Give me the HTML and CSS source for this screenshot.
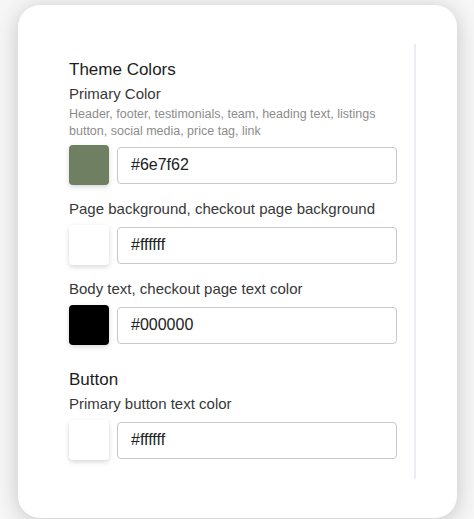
FILE: index.html
```html
<!DOCTYPE html>
<html lang="en">
<head>
    <meta charset="UTF-8">
    <meta name="viewport" content="width=device-width, initial-scale=1.0">
    <title>Theme Colors</title>
    <link rel="stylesheet" href="styles.css">
</head>
<body>
    <div class="card">
        <div class="panel">
            <h2 class="section-title">Theme Colors</h2>
            <h3 class="field-label">Primary Color</h3>
            <p class="field-help">Header, footer, testimonials, team, heading text, listings button, social media, price tag, link</p>
            <div class="color-row">
                <span class="swatch swatch-green"></span>
                <input class="hex-input" type="text" value="#6e7f62">
            </div>

            <h3 class="field-label spaced">Page background, checkout page background</h3>
            <div class="color-row">
                <span class="swatch swatch-white"></span>
                <input class="hex-input" type="text" value="#ffffff">
            </div>

            <h3 class="field-label spaced">Body text, checkout page text color</h3>
            <div class="color-row">
                <span class="swatch swatch-black"></span>
                <input class="hex-input" type="text" value="#000000">
            </div>

            <h2 class="section-title next-section">Button</h2>
            <h3 class="field-label">Primary button text color</h3>
            <div class="color-row">
                <span class="swatch swatch-white"></span>
                <input class="hex-input" type="text" value="#ffffff">
            </div>
        </div>
    </div>
</body>
</html>
```

FILE: styles.css
```css
html, body {
    height: 100%;
}
body {
    margin: 0;
    overflow: hidden;
    background-color: #f6f6f6;
    font-family: "Liberation Sans", Arial, sans-serif;
}
.card {
    box-sizing: border-box;
    width: 439px;
    height: 513px;
    margin: 5px 0 0 18px;
    padding: 39px 41px 0 51px;
    background-color: #fff;
    border-radius: 22px;
    box-shadow: 0 3px 22px rgba(0,0,0,0.2);
}
.panel {
    box-sizing: border-box;
    height: 435px;
    padding: 15px 17px 0 0;
    border-right: 2px solid #ebebf3;
}
.section-title {
    margin: 0;
    font-size: 17px;
    line-height: 22px;
    font-weight: normal;
    color: #1c1c1c;
}
.next-section {
    margin-top: 24px;
}
.field-label {
    margin: 3px 0 0;
    font-size: 15px;
    line-height: 20px;
    font-weight: normal;
    color: #383838;
}
.field-label.spaced {
    margin-top: 14px;
}
.field-help {
    margin: 2px 0 0;
    font-size: 12.5px;
    line-height: 17px;
    color: #8c8c8c;
}
.color-row {
    display: flex;
    align-items: center;
    gap: 8px;
    height: 40px;
    margin-top: 6px;
}
.field-help + .color-row {
    margin-top: 5px;
}
.swatch {
    width: 40px;
    height: 40px;
    border-radius: 4px;
    box-shadow: 0 2px 5px rgba(0,0,0,0.16);
}
.swatch-green {
    background-color: #6e7f62;
}
.swatch-white {
    background-color: #fff;
}
.swatch-black {
    background-color: #000;
}
.hex-input {
    box-sizing: border-box;
    flex: 1;
    height: 37px;
    padding: 0 13px;
    border: 1.5px solid #c8c8c8;
    border-radius: 4px;
    font-family: inherit;
    font-size: 16px;
    color: #222;
    background: #fff;
}
```
